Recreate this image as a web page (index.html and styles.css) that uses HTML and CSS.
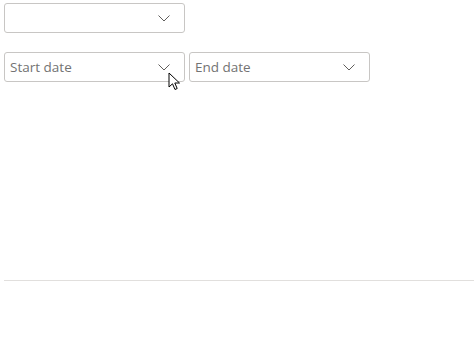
FILE: index.html
```html
<!DOCTYPE html>
<html lang="en">
<head>
    <meta charset="UTF-8">
    <title>Date range</title>
    <link rel="stylesheet" href="styles.css">
</head>
<body>
    <div class="page">
        <div class="row">
            <div class="dropdown">
                <span class="label"></span>
                <svg class="chevron" width="12" height="7" viewBox="0 0 12 7"><path d="M0.5 0.5 L6 6 L11.5 0.5" fill="none" stroke="#605e5c" stroke-width="1"/></svg>
            </div>
        </div>
        <div class="row dates">
            <div class="dropdown">
                <span class="label">Start date</span>
                <svg class="chevron" width="12" height="7" viewBox="0 0 12 7"><path d="M0.5 0.5 L6 6 L11.5 0.5" fill="none" stroke="#605e5c" stroke-width="1"/></svg>
                <svg class="cursor" width="13" height="20" viewBox="0 0 13 20"><path d="M1 1 L1 15 L4.5 11.8 L7 17.5 L9.2 16.5 L6.8 11 L11.5 11 Z" fill="#fff" stroke="#000" stroke-width="1" stroke-linejoin="round"/></svg>
            </div>
            <div class="dropdown">
                <span class="label">End date</span>
                <svg class="chevron" width="12" height="7" viewBox="0 0 12 7"><path d="M0.5 0.5 L6 6 L11.5 0.5" fill="none" stroke="#605e5c" stroke-width="1"/></svg>
            </div>
        </div>
        <div class="divider"></div>
    </div>
</body>
</html>
```

FILE: styles.css
```css
* {
    margin: 0;
    padding: 0;
    box-sizing: border-box;
}

body {
    background: #fff;
    font-family: 'Open Sans', 'Noto Sans', sans-serif;
    color: #605e5c;
}

.page {
    padding: 3px 0 0 4px;
}

.row {
    display: flex;
    gap: 4px;
}

.dates {
    margin-top: 19px;
}

.dropdown {
    position: relative;
    width: 181px;
    height: 30px;
    border: 1px solid #c8c6c4;
    border-radius: 3px;
    display: flex;
    align-items: center;
    justify-content: space-between;
    padding: 0 14px 0 5px;
}

.label {
    font-size: 13.5px;
    color: #737373;
}

.chevron {
    display: block;
}

.cursor {
    position: absolute;
    left: 163px;
    top: 19px;
}

.divider {
    margin-top: 198px;
    height: 1px;
    background: #e1dfdd;
}
```
